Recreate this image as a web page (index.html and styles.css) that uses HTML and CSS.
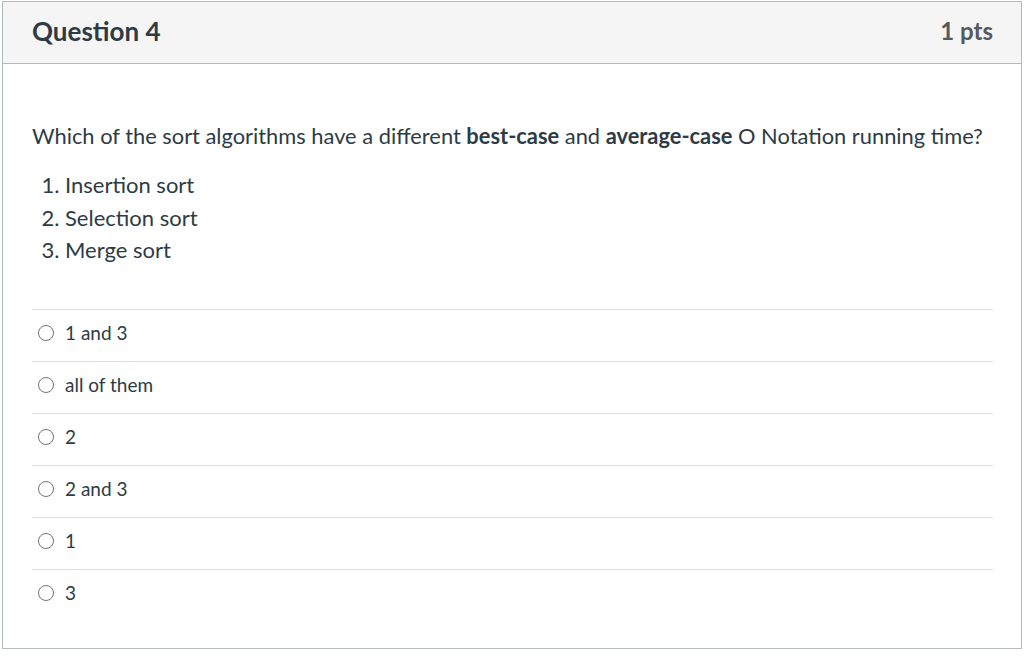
FILE: index.html
```html
<!DOCTYPE html>
<html>
<head>
<meta charset="utf-8">
<link rel="stylesheet" href="styles.css">
</head>
<body>
<div class="card">
  <div class="header">
    <h2 class="title">Question 4</h2>
    <div class="pts">1 pts</div>
  </div>
  <div class="content">
    <p class="question">Which of the sort algorithms have a different <strong>best-case</strong> and <strong>average-case</strong> O Notation running time?</p>
    <ol class="list">
      <li>Insertion sort</li>
      <li>Selection sort</li>
      <li>Merge sort</li>
    </ol>
    <div class="answers">
      <label class="answer"><span class="radio"></span><span>1 and 3</span></label>
      <label class="answer"><span class="radio"></span><span>all of them</span></label>
      <label class="answer"><span class="radio"></span><span>2</span></label>
      <label class="answer"><span class="radio"></span><span>2 and 3</span></label>
      <label class="answer"><span class="radio"></span><span>1</span></label>
      <label class="answer"><span class="radio"></span><span>3</span></label>
    </div>
  </div>
</div>
</body>
</html>
```
FILE: styles.css
```css
html, body {
  margin: 0;
  padding: 0;
  background: #fff;
}
body {
  font-family: Lato, "Open Sans", "Liberation Sans", sans-serif;
  color: #2d3b45;
  padding: 1px 0 0 2px;
}
.card {
  width: 1020px;
  height: 648px;
  box-sizing: border-box;
  border: 1px solid #b4b9bd;
}
.header {
  background: #f5f5f5;
  border-bottom: 1px solid #b4b9bd;
  display: flex;
  align-items: center;
  justify-content: space-between;
  padding: 0 28px 3px 29px;
  box-sizing: border-box;
  height: 62px;
}
.title {
  margin: 0;
  font-size: 26px;
  line-height: 32px;
  font-weight: 700;
  color: #2d3b45;
}
.pts {
  font-size: 24px;
  line-height: 32px;
  font-weight: 700;
  color: #555a5e;
}
.content {
  padding: 57px 28px 0 29px;
}
.question {
  margin: 0;
  font-size: 21.85px;
  line-height: 30px;
}
.question strong {
  font-weight: 700;
}
.list {
  margin: 18px 0 0 0;
  padding-left: 33px;
  font-size: 22px;
  line-height: 32.5px;
}
.answers {
  margin-top: 42px;
}
.answer {
  display: flex;
  align-items: center;
  height: 46px;
  padding-bottom: 5px;
  border-top: 1px solid #dcdee0;
  font-size: 19px;
}
.radio {
  width: 14px;
  height: 14px;
  border: 1px solid #6e7478;
  border-radius: 50%;
  margin: 0 11px 0 6px;
  flex: none;
}
```
